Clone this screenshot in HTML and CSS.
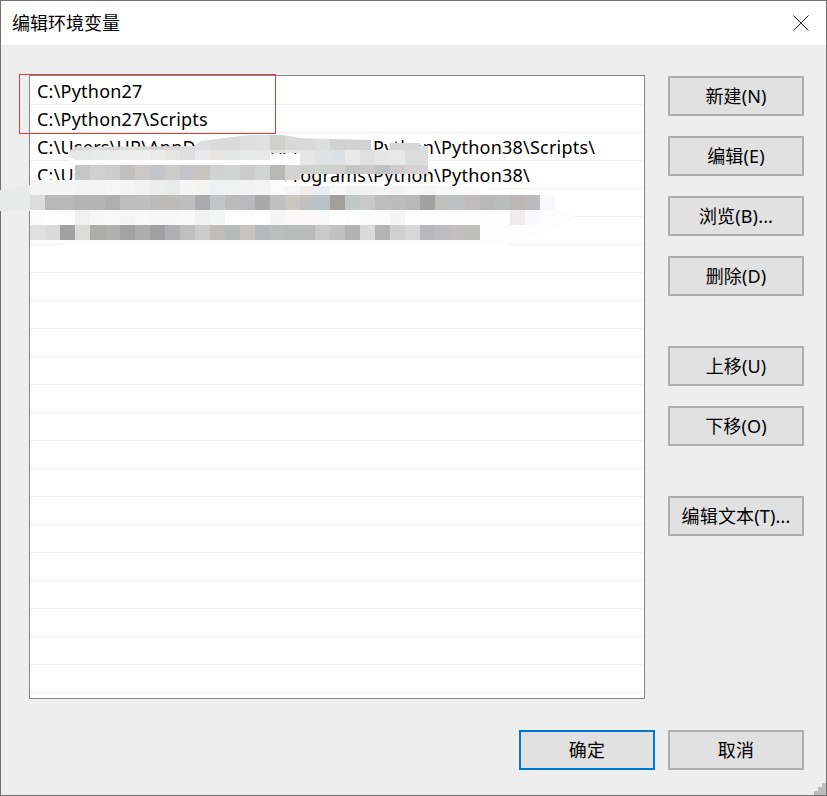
FILE: index.html
```html
<!DOCTYPE html>
<html lang="zh-CN">
<head>
<meta charset="utf-8">
<title>编辑环境变量</title>
<link rel="stylesheet" href="styles.css">
</head>
<body>
<div class="window">
  <header class="titlebar">
    <span class="title">编辑环境变量</span>
    <svg class="close" viewBox="0 0 16 16" width="16" height="16"><path d="M.5.5l15 15M15.500.5l-15 15"/></svg>
  </header>
  <main class="content">
    <div class="upper">
      <ul class="list">
        <li>C:\Python27</li>
        <li>C:\Python27\Scripts</li>
        <li>C:\Users\HP\AppData\Local\Programs\Python\Python38\Scripts\</li>
        <li>C:\Users\HP\AppData\Local\Programs\Python\Python38\</li>
        <li></li><li></li><li></li><li></li><li></li><li></li><li></li><li></li><li></li><li></li><li></li><li></li><li></li><li></li><li></li><li></li><li></li><li></li>
      </ul>
      <div class="actions">
        <button class="btn">新建(N)</button>
        <button class="btn">编辑(E)</button>
        <button class="btn">浏览(B)...</button>
        <button class="btn">删除(D)</button>
        <button class="btn group">上移(U)</button>
        <button class="btn">下移(O)</button>
        <button class="btn group">编辑文本(T)...</button>
      </div>
    </div>
    <footer class="footer">
      <button class="btn primary">确定</button>
      <button class="btn">取消</button>
    </footer>
    <svg class="grip" viewBox="0 0 12 12" width="12" height="12"><path d="M8 0h4v4H8zM4 4h4v4H4zM8 4h4v4H8zM0 8h4v4H0zM4 8h4v4H4zM8 8h4v4H8z"/></svg>
  </main>
  <svg class="mosaic" viewBox="0 0 827 796" width="827" height="796" aria-hidden="true">
    <clipPath id="slope"><polygon points="68,152 75,147 195,146 200,141 250,135 283,135 300,138 330,139 371,140 371,150 68,152"/></clipPath>
    <path class="smear-left" d="M0 190L30 185V211H0Z"/>
    <path class="smear" d="M75 180L30 183V241L75 246H505L560 226L575 216L487 190V186H285V180Z"/>
    <rect class="strip" x="68" y="160" width="232" height="5"/>
    <path class="wedge" d="M68 152L75 148V160L68 157Z"/>
    <g class="b a" clip-path="url(#slope)">
      <rect x="60" fill="#dcdcdc"/><rect x="75" fill="#d8d8d8"/><rect x="90" fill="#dadada"/><rect x="105" fill="#d6d6d6"/><rect x="120" fill="#dcdcdc"/><rect x="135" fill="#d8d8d8"/><rect x="150" fill="#d4d4d4"/><rect x="165" fill="#d6d6d6"/><rect x="180" fill="#dcdcdc"/><rect x="195" fill="#dedede"/><rect x="210" fill="#dbdbdb"/><rect x="225" fill="#dadada"/><rect x="240" fill="#dedede"/><rect x="255" fill="#e0e0e0"/><rect x="270" fill="#cfcfcc"/><rect x="285" fill="#d8d8d8"/><rect x="300" fill="#d8d9d8"/><rect x="315" fill="#dcdedd"/><rect x="330" fill="#d0d0ce"/><rect x="345" fill="#d2d2d2"/><rect x="360" fill="#d2d2d0"/>
    </g>
    <rect class="tail" x="390" y="143" fill="#d6d6d8"/><rect class="tail" x="405" y="143" fill="#d8d6d6"/><rect class="tail end" x="420" y="146" fill="#dcdcdc"/>
    <g class="b b2">
      <rect class="mid" x="75" fill="#e6e7e7"/><rect class="mid" x="90" fill="#e8e9e9"/><rect class="mid" x="105" fill="#ebebeb"/><rect class="mid" x="120" fill="#ecedec"/><rect class="mid" x="135" fill="#eceded"/><rect class="mid" x="150" fill="#eaeaea"/><rect class="mid" x="165" fill="#e4e4e2"/><rect class="mid" x="180" fill="#dfdfdf"/><rect class="mid" x="195" fill="#e7e9eb"/><rect class="mid" x="210" fill="#e6e4e2"/><rect class="mid" x="225" fill="#e3e5e5"/><rect class="mid" x="240" fill="#e6e7e7"/><rect class="mid" x="255" fill="#e8e8e8"/><rect class="thin" x="270" fill="#dfdfdd"/><rect class="thin" x="285" fill="#e8e8e8"/><rect x="300" fill="#e6e6e6"/><rect x="315" fill="#dfe2e2"/><rect x="330" fill="#dde0e2"/><rect x="345" fill="#e8e8e8"/><rect x="360" fill="#e0e2e2"/><rect x="375" fill="#e6e6e6"/><rect x="390" fill="#e8e8e8"/><rect x="405" fill="#dcdcdc"/><rect class="end" x="420" fill="#dcdcdc"/>
    </g>
    <g class="b c">
      <rect x="75" fill="#c6c6c6"/><rect x="90" fill="#d0d0d0"/><rect x="105" fill="#cdcdcd"/><rect x="120" fill="#c0c0be"/><rect x="135" fill="#cbc9c7"/><rect x="150" fill="#c3c5c8"/><rect x="165" fill="#cdcbc9"/><rect x="180" fill="#c2c4c7"/><rect x="195" fill="#c6c3c0"/><rect x="210" fill="#d0d2d2"/><rect x="225" fill="#d2d4d4"/><rect x="240" fill="#cbcbcb"/><rect x="255" fill="#d1d3d3"/><rect x="270" fill="#b7b7b5"/><rect x="285" fill="#d3d3d3"/><rect class="short" x="300" fill="#d0d0ce"/><rect class="short" x="315" fill="#cfd1cf"/><rect class="short" x="330" fill="#d0d0ce"/><rect class="short" x="345" fill="#c4c6c6"/><rect class="short" x="360" fill="#cacaca"/><rect class="short" x="375" fill="#c0c2c4"/><rect class="short" x="390" fill="#cdcbcb"/><rect class="short" x="405" fill="#d4d2d2"/><rect class="short end" x="420" fill="#d4d2d2"/>
    </g>
    <g class="b d">
      <rect x="30" fill="#f4f4f4"/><rect x="45" fill="#f4f5f5"/><rect x="60" fill="#f5f5f5"/><rect x="75" fill="#f2f3f3"/><rect x="90" fill="#f3f3f3"/><rect x="105" fill="#f6f6f6"/><rect x="120" fill="#f4f4f2"/><rect x="135" fill="#f1f1f1"/><rect x="150" fill="#ebedec"/><rect x="165" fill="#e9ebea"/><rect x="180" fill="#f5f5f5"/><rect x="195" fill="#f3f3f1"/><rect x="210" fill="#eef0f1"/><rect x="225" fill="#f0f1f1"/><rect x="240" fill="#f2f2f2"/><rect x="255" fill="#f3f3f3"/><rect x="270" fill="#fbfbfb"/><rect class="low" x="285" fill="#f6f6f6"/><rect class="low" x="300" fill="#f0eeec"/><rect class="low" x="315" fill="#ebedef"/><rect class="low" x="330" fill="#f8f8f8"/><rect class="low" x="345" fill="#f1f3f3"/><rect class="low" x="360" fill="#f2f2f0"/><rect class="low" x="375" fill="#f5f5f5"/><rect class="low" x="390" fill="#f2f2f2"/><rect class="low" x="405" fill="#f6f6f6"/><rect class="low" x="420" fill="#f5f5f5"/><rect class="low" x="435" fill="#f9f9f9"/><rect class="low" x="450" fill="#f8f8f8"/><rect class="low" x="465" fill="#fbfbfb"/>
    </g>
    <g class="b e">
      <rect x="30" fill="#dcdcda"/><rect x="45" fill="#b8b8b8"/><rect x="60" fill="#b8b8b8"/><rect x="75" fill="#b3b3b3"/><rect x="90" fill="#b4b4b4"/><rect x="105" fill="#aeaeae"/><rect x="120" fill="#bdbdbd"/><rect x="135" fill="#bebebe"/><rect x="150" fill="#bbbbb9"/><rect x="165" fill="#bdbbb9"/><rect x="180" fill="#bebdc0"/><rect x="195" fill="#a8aaad"/><rect x="210" fill="#c3c5c5"/><rect x="225" fill="#bbbbbb"/><rect x="240" fill="#b8babd"/><rect x="255" fill="#a9a9a9"/><rect x="270" fill="#c0c0c0"/><rect x="285" fill="#cac6c2"/><rect x="300" fill="#c1c1c1"/><rect x="315" fill="#b9c2c6"/><rect x="330" fill="#a49e9a"/><rect x="345" fill="#bfc7c7"/><rect x="360" fill="#c9c9c9"/><rect x="375" fill="#bdbdbd"/><rect x="390" fill="#bcbcbc"/><rect x="405" fill="#bab8b6"/><rect x="420" fill="#9fa1a3"/><rect x="435" fill="#c1bfbb"/><rect x="450" fill="#bdc1c3"/><rect x="465" fill="#bfbcbc"/><rect x="480" fill="#b8b8b8"/><rect x="495" fill="#b9bdbd"/><rect x="510" fill="#bcb7b5"/><rect x="525" fill="#bbbbbd"/><rect x="540" fill="#f7f8fb"/>
    </g>
    <g class="b f">
      <rect x="30" fill="#fbfbfb"/><rect x="45" fill="#fdfdfd"/><rect x="60" fill="#fcfcfc"/><rect x="75" fill="#f0f0f0"/><rect x="90" fill="#f7f7f7"/><rect x="105" fill="#f8f8f6"/><rect x="120" fill="#f5f5f5"/><rect x="135" fill="#f8f8f8"/><rect x="150" fill="#f6f6f6"/><rect x="165" fill="#f7f7f7"/><rect x="180" fill="#f8f8f8"/><rect x="195" fill="#f0f0f0"/><rect x="210" fill="#f3f5f4"/><rect x="225" fill="#ffffff"/><rect x="240" fill="#fdfdfd"/><rect x="255" fill="#ffffff"/><rect x="270" fill="#f5f5f5"/><rect x="285" fill="#f8f8f8"/><rect x="300" fill="#f9f7f7"/><rect x="315" fill="#f8f8f8"/><rect x="330" fill="#ffffff"/><rect x="345" fill="#fcfcfa"/><rect x="360" fill="#fbfbfb"/><rect x="375" fill="#fafcfb"/><rect x="390" fill="#f4f4f4"/><rect x="405" fill="#fdfdfd"/><rect x="510" fill="#efedeb"/><rect x="525" fill="#f8f9fb"/>
    </g>
    <g class="b g">
      <rect x="30" fill="#e0e0e0"/><rect x="45" fill="#dadad8"/><rect x="60" fill="#a0a1a3"/><rect x="75" fill="#dbdbd9"/><rect x="90" fill="#aeacaa"/><rect x="105" fill="#b0b0ae"/><rect x="120" fill="#a2a2a2"/><rect x="135" fill="#adadab"/><rect x="150" fill="#a0a0a2"/><rect x="165" fill="#aeb0b2"/><rect x="180" fill="#bfbfbf"/><rect x="195" fill="#cbcbcb"/><rect x="210" fill="#bfbdba"/><rect x="225" fill="#b7b9bb"/><rect x="240" fill="#c5c3bf"/><rect x="255" fill="#b6b8ba"/><rect x="270" fill="#bcbebe"/><rect x="285" fill="#b8bbb9"/><rect x="300" fill="#b9bbbb"/><rect x="315" fill="#c9c9c9"/><rect x="330" fill="#c1c1c1"/><rect x="345" fill="#b2b2b2"/><rect x="360" fill="#dadad8"/><rect x="375" fill="#b4b4b4"/><rect x="390" fill="#d0d0d0"/><rect x="405" fill="#d7d7d7"/><rect x="420" fill="#b6b8ba"/><rect x="435" fill="#bdbdbf"/><rect x="450" fill="#c0bebe"/><rect x="465" fill="#bebebc"/>
    </g>
  </svg>
  <div class="highlight"></div>
</div>
</body>
</html>
```

FILE: styles.css
```css
* { box-sizing: border-box; }
html, body { margin: 0; padding: 0; }
body {
  width: 827px;
  height: 796px;
  overflow: hidden;
  font-family: "Noto Sans", "Noto Sans CJK SC", sans-serif;
  font-size: 18px;
  color: #000;
}
.window {
  position: relative;
  width: 827px;
  height: 796px;
  border: 1px solid #6f6f6f;
  display: flex;
  flex-direction: column;
  background: #eee;
}
.titlebar {
  height: 44px;
  flex: none;
  background: #fff;
  display: flex;
  align-items: center;
  justify-content: space-between;
  padding: 0 17px 0 11px;
}
.title { line-height: 44px; }
.close { display: block; }
.close path { fill: none; stroke: #111; stroke-width: 1; }
.content {
  position: relative;
  flex: 1;
  display: flex;
  flex-direction: column;
  justify-content: space-between;
  padding: 30px 22px 25px 28px;
}
.upper { display: flex; justify-content: space-between; }
.list {
  list-style: none;
  margin: 0;
  padding: 1px 0 0;
  width: 616px;
  height: 624px;
  background: #fff;
  border: 1px solid #82878c;
}
.list li {
  height: 28px;
  padding-left: 7px;
  line-height: 28px;
  letter-spacing: .22px;
  white-space: nowrap;
  border-bottom: 1px solid #f0f0f0;
  margin-right: 1px;
}
.actions { display: flex; flex-direction: column; gap: 20px; width: 136px; padding-top: 1px; }
.btn {
  width: 136px;
  height: 40px;
  padding: 0 0 2px;
  font: inherit;
  letter-spacing: .15px;
  color: #000;
  background: #e1e1e1;
  border: 2px solid #adadad;
}
.group { margin-top: 30px; }
.footer { display: flex; justify-content: flex-end; gap: 13px; }
.primary { border-color: #0078d7; }
.grip { position: absolute; right: 0; bottom: 0; }
.grip path { fill: #bcbcbc; }
.mosaic { position: absolute; left: -1px; top: -1px; pointer-events: none; }
.smear, .strip { fill: #fdfdfd; }
.smear-left { fill: #e8e9e9; }
.wedge { fill: #e6e7e7; }
.b rect, .tail { width: 15px; height: 15px; }
.tail { height: 7px; }
.tail.end { height: 4px; }
.b .end, .tail.end { width: 8px; }
.a rect { y: 133px; height: 19px; }
.b2 rect { y: 150px; }
.c rect { y: 165px; }
.d rect { y: 180px; }
.e rect { y: 195px; }
.f rect { y: 210px; }
.g rect { y: 225px; }
.b2 .mid { height: 10px; }
.b2 .thin { height: 3px; }
.c .short { height: 9px; }
.d .low { y: 186px; height: 9px; }
.highlight {
  position: absolute;
  left: 18px;
  top: 73px;
  width: 257px;
  height: 60px;
  border: 1px solid #e8383d;
  pointer-events: none;
}
```
